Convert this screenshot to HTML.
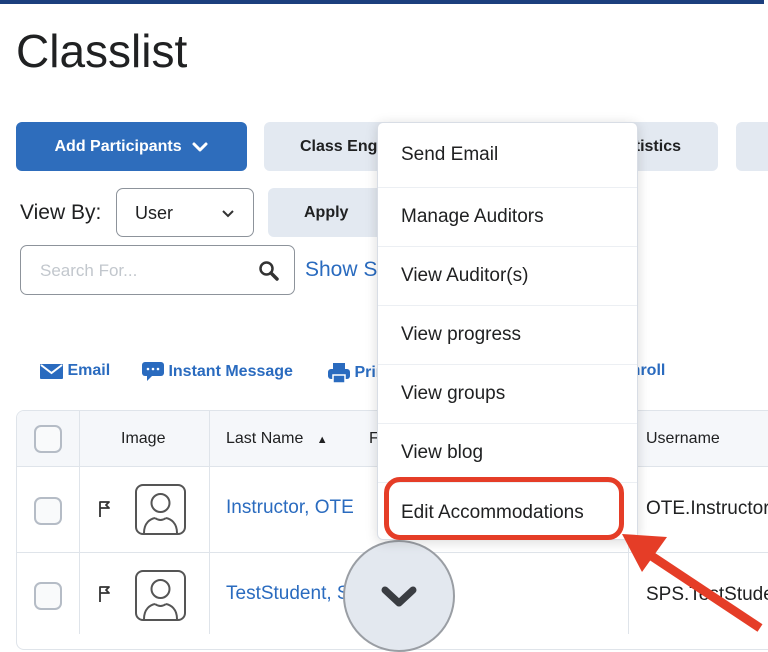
<!DOCTYPE html>
<html><head><meta charset="utf-8"><style>
*{box-sizing:border-box;margin:0;padding:0}
body{width:768px;height:634px;overflow:hidden;background:#fff;font-family:"Liberation Sans",sans-serif;color:#202122;position:relative}
.a{position:absolute}
.btn{position:absolute;border-radius:6px;background:#e3e9f1;font-weight:bold;font-size:16px;color:#202122;display:flex;align-items:center;justify-content:center}
.link{color:#2a6bbf}
.menu{position:absolute;left:377px;top:122px;width:261px;height:418px;background:#fff;border:1px solid #d8dde5;border-radius:6px;box-shadow:0 2px 12px rgba(0,0,0,.15)}
.mi{height:59px;border-bottom:1px solid #eceff3;font-size:19px;padding-left:23px;display:flex;align-items:center;color:#202122}
.cb{position:absolute;width:28px;height:28px;border:2px solid #b5bcc6;border-radius:7px;background:#f9fafb}
.vl{position:absolute;width:1px;background:#dfe4ea}
.hl{position:absolute;height:1px;background:#dfe4ea}
</style></head><body>
<div class="a" style="left:0;top:0;width:764px;height:4px;background:#1c3f7e"></div>
<div class="a" style="left:16px;top:24px;font-size:46px;color:#202122">Classlist</div>

<div class="btn" style="left:16px;top:122px;width:231px;height:49px;background:#2e6dbc;color:#fff">Add Participants&nbsp;&nbsp;
<svg width="18" height="12" viewBox="0 0 18 12"><path d="M3 3l6 6 6-6" stroke="#fff" stroke-width="3" fill="none" stroke-linecap="round" stroke-linejoin="round"/></svg></div>
<div class="btn" style="left:264px;top:122px;width:454px;height:49px;justify-content:flex-start;padding-left:36px">Class Engagement<span style="margin-left:auto;margin-right:37px">Statistics</span></div>
<div class="btn" style="left:736px;top:122px;width:60px;height:49px"></div>

<div class="a" style="left:20px;top:201px;font-size:21px">View By:</div>
<div class="a" style="left:116px;top:188px;width:138px;height:49px;border:1.5px solid #8d939b;border-radius:7px;font-size:18px;padding:14px 0 0 18px">User
<svg class="a" style="left:104px;top:20px" width="14" height="9" viewBox="0 0 14 9"><path d="M2 2l5 5 5-5" stroke="#333" stroke-width="2" fill="none"/></svg></div>
<div class="btn" style="left:268px;top:188px;width:160px;height:49px;justify-content:flex-start;padding-left:36px">Apply</div>

<div class="a" style="left:20px;top:245px;width:275px;height:50px;border:1.5px solid #8d939b;border-radius:7px;font-size:17px;color:#c2c7cd;padding:15px 0 0 19px">Search For...
<svg class="a" style="left:237px;top:14px" width="22" height="22" viewBox="0 0 22 22"><circle cx="8.5" cy="8.5" r="6" stroke="#333" stroke-width="2.5" fill="none"/><path d="M13 13l6 6" stroke="#333" stroke-width="3.5" stroke-linecap="round"/></svg></div>
<div class="a link" style="left:305px;top:258px;font-size:21px">Show Search Options</div>

<div class="a link" style="left:40px;top:362px;font-size:16px;font-weight:bold;display:flex;align-items:center">
<svg width="23" height="15" viewBox="0 0 23 15"><rect width="23" height="15" rx="1" fill="#2a6bbf"/><path d="M1 1l10.5 8L22 1" stroke="#fff" stroke-width="2" fill="none"/></svg>&nbsp;Email</div>
<div class="a link" style="left:142px;top:362px;font-size:16px;font-weight:bold;display:flex;align-items:center">
<svg width="22" height="19" viewBox="0 0 22 19"><rect width="22" height="14" rx="3" fill="#2a6bbf"/><path d="M5 13l0 6 6-6z" fill="#2a6bbf"/><circle cx="6" cy="7" r="1.3" fill="#fff"/><circle cx="11" cy="7" r="1.3" fill="#fff"/><circle cx="16" cy="7" r="1.3" fill="#fff"/></svg>&nbsp;Instant Message</div>
<div class="a link" style="left:328px;top:362px;font-size:16px;font-weight:bold;display:flex;align-items:center">
<svg width="22" height="22" viewBox="0 0 22 22"><rect x="5" y="1" width="12" height="6" fill="#2a6bbf"/><rect x="0" y="7" width="22" height="10" rx="3" fill="#2a6bbf"/><rect x="5" y="13" width="12" height="8" fill="#2a6bbf" stroke="#fff" stroke-width="1.5"/></svg>&nbsp;Print</div>
<div class="a link" style="left:620px;top:362px;font-size:16px;font-weight:bold">Enroll</div>

<div class="a" style="left:16px;top:410px;width:780px;height:240px;border:1px solid #dfe4ea;border-radius:8px;overflow:hidden">
<div class="a" style="left:0;top:0;width:780px;height:56px;background:#f5f7fa"></div>
</div>
<div class="hl" style="left:16px;top:466px;width:752px"></div>
<div class="hl" style="left:16px;top:552px;width:752px"></div>
<div class="vl" style="left:79px;top:410px;height:224px"></div>
<div class="vl" style="left:209px;top:410px;height:224px"></div>
<div class="vl" style="left:628px;top:410px;height:224px"></div>
<div class="cb" style="left:34px;top:425px"></div>
<div class="cb" style="left:34px;top:497px"></div>
<div class="cb" style="left:34px;top:582px"></div>
<div class="a" style="left:121px;top:430px;font-size:16px">Image</div>
<div class="a" style="left:226px;top:430px;font-size:16px">Last Name&nbsp;&nbsp;&nbsp;<span style="font-size:11px">▲</span></div>
<div class="a" style="left:369px;top:430px;font-size:16px">First Name</div>
<div class="a" style="left:646px;top:430px;font-size:16px">Username</div>

<svg class="a" style="left:98px;top:500px" width="14" height="18" viewBox="0 0 14 18"><path d="M2 17V2h9l-3 3 3 3H2" stroke="#333" stroke-width="1.8" fill="none" stroke-linejoin="round"/></svg>
<svg class="a" style="left:98px;top:585px" width="14" height="18" viewBox="0 0 14 18"><path d="M2 17V2h9l-3 3 3 3H2" stroke="#333" stroke-width="1.8" fill="none" stroke-linejoin="round"/></svg>
<svg class="a" style="left:135px;top:484px" width="51" height="51" viewBox="0 0 51 51"><rect x="1" y="1" width="49" height="49" rx="7" stroke="#555" stroke-width="2" fill="#fff"/><circle cx="25.5" cy="19" r="9" stroke="#555" stroke-width="2" fill="none"/><path d="M9 49c0-10 6-14 11-15M42 49c0-10-6-14-11-15M20 34q5.5 4 11 0" stroke="#555" stroke-width="2" fill="none"/></svg>
<svg class="a" style="left:135px;top:570px" width="51" height="51" viewBox="0 0 51 51"><rect x="1" y="1" width="49" height="49" rx="7" stroke="#555" stroke-width="2" fill="#fff"/><circle cx="25.5" cy="19" r="9" stroke="#555" stroke-width="2" fill="none"/><path d="M9 49c0-10 6-14 11-15M42 49c0-10-6-14-11-15M20 34q5.5 4 11 0" stroke="#555" stroke-width="2" fill="none"/></svg>
<div class="a link" style="left:226px;top:497px;font-size:19px">Instructor, OTE</div>
<div class="a link" style="left:226px;top:583px;font-size:19px">TestStudent, SPS</div>
<div class="a" style="left:646px;top:498px;font-size:19px">OTE.Instructor</div>
<div class="a" style="left:646px;top:584px;font-size:19px">SPS.TestStudent</div>

<div class="a" style="left:343px;top:540px;width:112px;height:112px;border-radius:50%;border:2px solid #9a9ea4;background:#e3e8ef"></div>
<svg class="a" style="left:380px;top:585px" width="38" height="26" viewBox="0 0 38 26"><path d="M5 5l14 13 14-13" stroke="#3a3d42" stroke-width="7" fill="none" stroke-linecap="round" stroke-linejoin="round"/></svg>

<div class="menu">
<div class="mi" style="height:65px">Send Email</div>
<div class="mi">Manage Auditors</div>
<div class="mi">View Auditor(s)</div>
<div class="mi">View progress</div>
<div class="mi">View groups</div>
<div class="mi">View blog</div>
<div class="mi" style="border:none">Edit Accommodations</div>
</div>
<div class="a" style="left:384px;top:477px;width:240px;height:63px;border:5px solid #e53d27;border-radius:16px"></div>
<svg class="a" style="left:0;top:0" width="768" height="634" viewBox="0 0 768 634"><path d="M760 628L650 555" stroke="#e53d27" stroke-width="9"/><path d="M622 534l45 3-25 35z" fill="#e53d27"/></svg>
</body></html>
